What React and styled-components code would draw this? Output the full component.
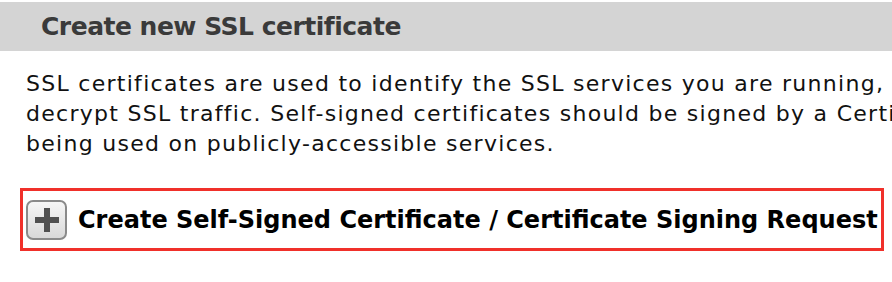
import React from "react";
import styled, { createGlobalStyle } from "styled-components";

const GlobalStyle = createGlobalStyle`
  html, body {
    margin: 0;
    padding: 0;
    background: #ffffff;
  }
  body {
    font-family: "DejaVu Sans", Verdana, sans-serif;
    overflow: hidden;
  }
`;

const Page = styled.div`
  width: 892px;
  height: 282px;
  overflow: hidden;
  padding-top: 2px;
  box-sizing: border-box;
`;

const SectionHeader = styled.h2`
  margin: 0;
  height: 49px;
  display: flex;
  align-items: center;
  padding-left: 41px;
  background: #d4d4d4;
  color: #3a3a3a;
  font-size: 25px;
  font-weight: 700;
  letter-spacing: -0.5px;
  white-space: nowrap;
`;

const Intro = styled.p`
  margin: 18px 0 0 26px;
  font-size: 22px;
  line-height: 30px;
  letter-spacing: 1.28px;
  color: #111111;
  white-space: nowrap;
`;

const Line = styled.span`
  display: block;
`;

const ActionBox = styled.div`
  margin: 29px 0 0 20px;
  width: 864px;
  height: 63px;
  box-sizing: border-box;
  border: 3px solid #f0302a;
  display: flex;
  align-items: center;
  gap: 11px;
  padding-left: 3px;
`;

const PlusButton = styled.button`
  width: 41px;
  height: 40px;
  padding: 0;
  border: 2px solid #8a8a8a;
  border-radius: 7px;
  background: linear-gradient(#f6f6f6, #d9d9d9);
  display: flex;
  align-items: center;
  justify-content: center;
  flex-shrink: 0;
`;

const ActionLabel = styled.span`
  font-size: 24px;
  font-weight: 700;
  color: #000000;
  white-space: nowrap;
`;

const PlusIcon = () => (
  <svg width="26" height="26" viewBox="0 0 26 26">
    <rect x="10" y="1" width="6" height="24" fill="#505050" />
    <rect x="1" y="10" width="24" height="6" fill="#505050" />
  </svg>
);

const App = () => (
  <Page>
    <GlobalStyle />
    <SectionHeader>Create new SSL certificate</SectionHeader>
    <Intro>
      <Line>SSL certificates are used to identify the SSL services you are running,</Line>
      <Line>decrypt SSL traffic. Self-signed certificates should be signed by a Certi</Line>
      <Line>being used on publicly-accessible services.</Line>
    </Intro>
    <ActionBox>
      <PlusButton type="button" aria-label="Create">
        <PlusIcon />
      </PlusButton>
      <ActionLabel>Create Self-Signed Certificate / Certificate Signing Request</ActionLabel>
    </ActionBox>
  </Page>
);

export default App;
